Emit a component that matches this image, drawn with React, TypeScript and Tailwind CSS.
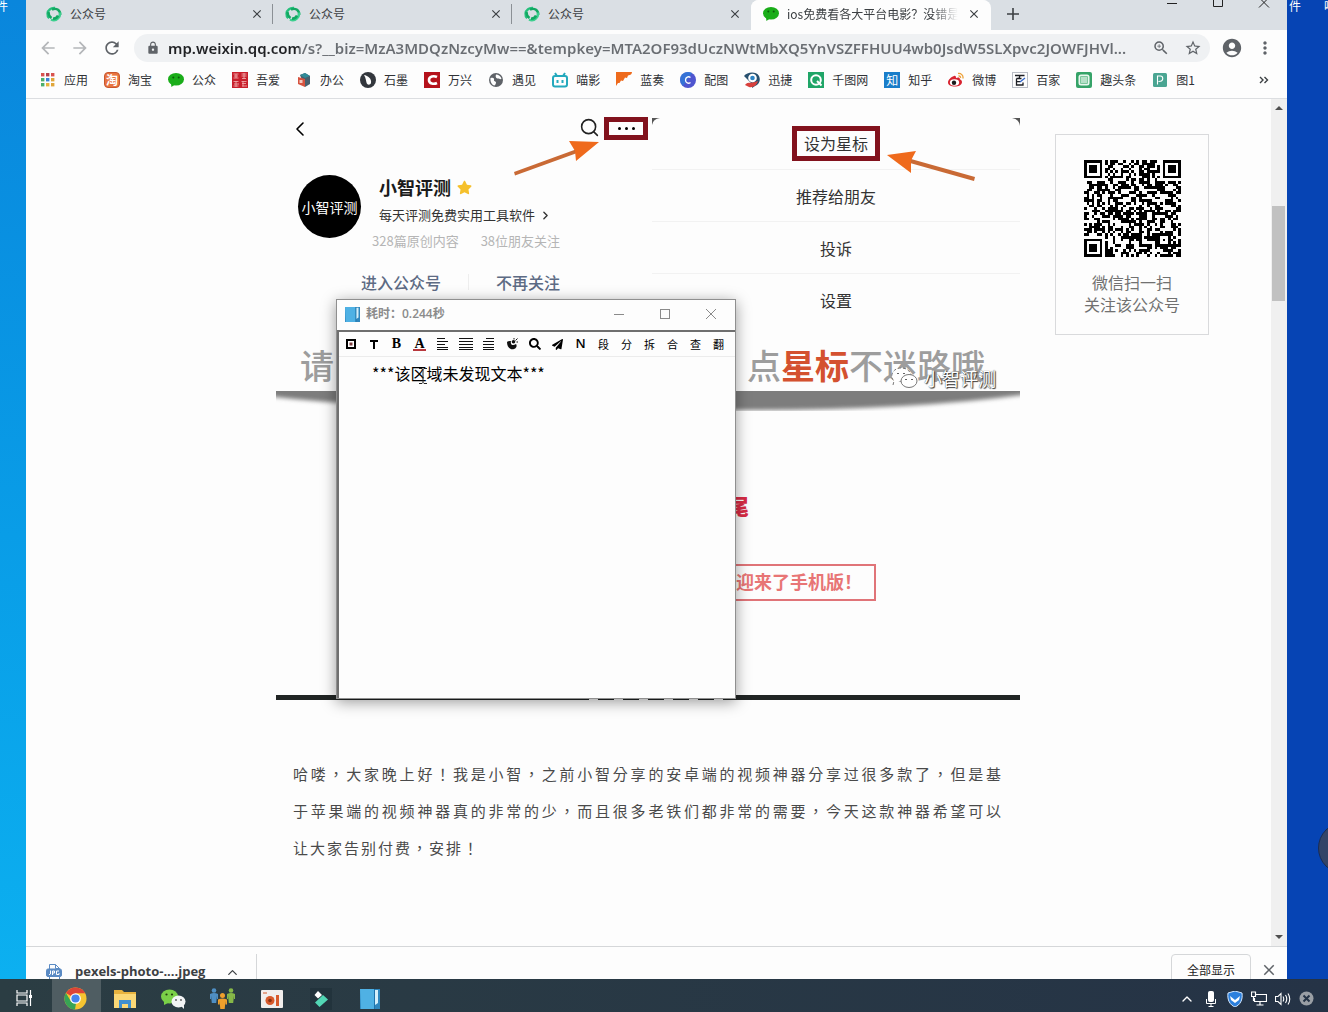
import type { ReactNode } from "react";
import clsx from "clsx";
import {
  MdAccountCircle,
  MdArrowBack,
  MdArrowForward,
  MdClose,
  MdLock,
  MdMoreVert,
  MdRefresh,
  MdStarBorder,
  MdZoomIn,
} from "react-icons/md";
import { FaPaperPlane, FaSearch, FaStar } from "react-icons/fa";
import { ChevronLeft, ChevronRight, ChevronUp, Search } from "lucide-react";

type Bookmark = {
  label: string;
  icon: ReactNode;
};

function SpiralIcon() {
  return (
    <svg width="16" height="16" viewBox="0 0 16 16" fill="none" strokeWidth="2.4">
      <path d="M3.200 12.200A6 6 0 0 1 4 3.200Q6 1.600 9 1.900" stroke="#25c07c" />
      <path d="M6 3.600Q9.500 2 12 3.800A6 6 0 0 1 14.200 9" stroke="#12a862" />
      <path d="M14 6.500Q14.500 10 12 12.300A6 6 0 0 1 5 13.500" stroke="#3ccf8e" />
      <path d="M12 9.500Q11 12.500 7 12.800" stroke="#12a862" />
      <path d="M2.500 6Q2.500 10 5.500 12" stroke="#12a862" />
    </svg>
  );
}

function BubbleIcon() {
  return (
    <svg width="16" height="16" viewBox="0 0 16 16">
      <path d="M3 11 3.400 15 7 12.600z" fill="#1aad19" />
      <ellipse cx="8" cy="7.200" rx="8" ry="6.300" fill="#1aad19" />
      <circle cx="5.300" cy="5.600" r="1" fill="#0b5d0a" />
      <circle cx="10.700" cy="5.600" r="1" fill="#0b5d0a" />
    </svg>
  );
}

function NotebookIcon({ size }: { size: number }) {
  return (
    <svg width={size} height={size} viewBox="0 0 20 20">
      <rect width="20" height="20" fill="#2f86bd" />
      <path d="M0 0h14v20H1z" fill="#4fb1e4" />
      <path d="M15 1h3v13l-3 2z" fill="#d5effa" />
      <path d="M14.500 0v20" stroke="#1d6ea6" strokeWidth=".8" />
    </svg>
  );
}

const appColors = ["#d9534f", "#b6404c", "#d9534f", "#4caf6d", "#3b82d6", "#e0a63a", "#4caf6d", "#e6b53b", "#e0a63a"];

const bookmarks: Bookmark[] = [
  {
    label: "应用",
    icon: (
      <svg width="16" height="16" viewBox="0 0 16 16">
        {appColors.map((c, i) => (
          <rect key={i} x={1 + (i % 3) * 5} y={1 + Math.floor(i / 3) * 5} width="3.4" height="3.4" fill={c} />
        ))}
      </svg>
    ),
  },
  {
    label: "淘宝",
    icon: (
      <span className="flex size-4 items-center justify-center rounded-sm border border-[#c9572e] bg-[#e8743f] text-xs font-bold leading-none text-white">
        淘
      </span>
    ),
  },
  { label: "公众", icon: <BubbleIcon /> },
  {
    label: "吾爱",
    icon: (
      <svg width="16" height="16" viewBox="0 0 16 16">
        <rect width="16" height="16" fill="#c8202c" />
        <path
          d="M1.5 2h5M2 4h4M4 2v4M1.5 6h5M9.5 2h5M9.5 4h5M12 1v6M10 6.500h4M1.5 9.500h5M2 12h5M4 9v6M1.500 14h5M9.500 9.500h5M10 11.500h4M10 14h5M11 9v5.500"
          stroke="#f3b4b4"
          strokeWidth=".8"
        />
      </svg>
    ),
  },
  {
    label: "办公",
    icon: (
      <svg width="16" height="16" viewBox="0 0 16 16">
        <path d="M4 3 9 1 14 4v8l-5 3z" fill="#47606e" />
        <path d="M4 3 9 1 14 4 9 6z" fill="#2f8b98" />
        <path d="M2 5l7 2v8l-7-3z" fill="#d6533f" />
        <path d="M3.500 8h3v3h-3z" fill="#f3c9c0" />
      </svg>
    ),
  },
  {
    label: "石墨",
    icon: (
      <svg width="16" height="16" viewBox="0 0 16 16">
        <circle cx="8" cy="8" r="8" fill="#33373d" />
        <path d="M4 3c4 .5 8 4 7 8-.6 2-3.500 2.300-4.300.3C6 9 6 6 4 3z" fill="#fff" />
      </svg>
    ),
  },
  {
    label: "万兴",
    icon: (
      <svg width="16" height="16" viewBox="0 0 16 16">
        <rect width="16" height="16" fill="#b5121b" />
        <path d="M13 5C10 3.500 5 4 5 8s5 4.500 8 3" fill="none" stroke="#fff" strokeWidth="2.600" />
      </svg>
    ),
  },
  {
    label: "遇见",
    icon: (
      <svg width="16" height="16" viewBox="0 0 16 16">
        <circle cx="8" cy="8" r="7" fill="#5f6368" />
        <path d="M2.500 6c3-1 4 .5 3.500 2s2 1 2 2.500-1 2.500-1.500 3C4 13 2 10 2.500 6zM8 2.500c2 0 4.500 1.500 5.500 4-1 1.500-2 0-3.500 0S7 5 8 2.500z" fill="#fff" />
      </svg>
    ),
  },
  {
    label: "喵影",
    icon: (
      <svg width="16" height="16" viewBox="0 0 16 16" fill="none" stroke="#24a9bd" strokeWidth="2">
        <rect x="1" y="4" width="14" height="10.500" rx="2" />
        <path d="M3 1l2 3M13 1l-2 3M5.500 8v3M10.500 8v3" />
      </svg>
    ),
  },
  {
    label: "蓝奏",
    icon: (
      <svg width="16" height="16" viewBox="0 0 16 16">
        <path d="M0 0h16q0 3-4 3.500l-1 2.500-2-.5L7 9 5 8.500 3.500 11 2 11 0 14z" fill="#ee6a1c" />
      </svg>
    ),
  },
  {
    label: "配图",
    icon: (
      <svg width="16" height="16" viewBox="0 0 16 16">
        <circle cx="8" cy="8" r="8" fill="#4f55cf" />
        <path d="M0 8a8 8 0 0 1 12-7L3 14a8 8 0 0 1-3-6z" fill="#2b7fd8" opacity=".7" />
        <path d="M10.500 5.500C8.500 4 5.500 5 5.500 8s3 4 5 2.500" fill="none" stroke="#fff" strokeWidth="1.300" />
      </svg>
    ),
  },
  {
    label: "迅捷",
    icon: (
      <svg width="16" height="16" viewBox="0 0 16 16">
        <path d="M0 4C3 0 12-1 15 4c2 4 0 9-4 10l-3 2 0-4z" fill="#28506f" />
        <path d="M1 13C4 9 8 12 14 9c-1 4-5 7-9 6z" fill="#d8403c" />
        <circle cx="8.500" cy="6" r="4.300" fill="#fff" />
        <circle cx="8.500" cy="6" r="2.300" fill="#2d84c6" />
      </svg>
    ),
  },
  {
    label: "千图网",
    icon: (
      <svg width="16" height="16" viewBox="0 0 16 16">
        <rect width="16" height="16" fill="#1fa567" />
        <circle cx="8" cy="8" r="4.800" fill="none" stroke="#fff" strokeWidth="2" />
        <path d="M9 9l4.500 4.500" stroke="#fff" strokeWidth="2" />
      </svg>
    ),
  },
  {
    label: "知乎",
    icon: (
      <span className="flex size-4 items-center justify-center bg-[#1a7dc9] text-xs leading-none text-white">知</span>
    ),
  },
  {
    label: "微博",
    icon: (
      <svg width="16" height="16" viewBox="0 0 16 16">
        <path d="M6 4C3 5 0 8 0 10.500 0 16 14 16 14 10c0-2-2-2.500-2-2.500C12 5 10 5 8 6c0-1.500-.5-2.500-2-2z" fill="#d8232f" />
        <ellipse cx="6.500" cy="10.500" rx="4.600" ry="3.200" fill="#fff" />
        <circle cx="6" cy="10.700" r="2.200" fill="#1b1b1b" />
        <path d="M10 1.500c3-.6 5.500 2 5 5M10.500 4c1.500-.2 2.300.8 2 2" stroke="#eda23a" fill="none" strokeWidth="1.300" />
      </svg>
    ),
  },
  {
    label: "百家",
    icon: (
      <svg width="16" height="16" viewBox="0 0 16 16" fill="none" stroke="#1d1f24" strokeWidth="1.300">
        <rect x=".5" y=".5" width="15" height="15" stroke="#b8bcc4" strokeWidth="1" />
        <path d="M3 3.500h9.500M8 3.500 7 6.500M4.500 6.500v6.500h6.500V10.500M4.500 6.500h5M4.500 9.700h3.500" />
        <path d="M8 10l5-4" stroke="#2b62c9" />
      </svg>
    ),
  },
  {
    label: "趣头条",
    icon: (
      <svg width="16" height="16" viewBox="0 0 16 16">
        <rect width="16" height="16" rx="2" fill="#36a368" />
        <rect x="2.500" y="2.500" width="11" height="11" rx="2.500" fill="#e9f7ef" />
        <rect x="4" y="4" width="8" height="8" rx="1" fill="#7cc79c" />
        <path d="M6 5v6M8 5v6M10 5v6" stroke="#fff" strokeWidth=".9" />
      </svg>
    ),
  },
  {
    label: "图1",
    icon: (
      <svg width="16" height="16" viewBox="0 0 16 16">
        <rect x="1" y="1" width="14" height="14" rx="1.500" fill="#4aa592" />
        <path d="M5.500 12.500V4h3c3 0 3 5 0 5.200l-2 .3" stroke="#fff" fill="none" strokeWidth="1.100" />
      </svg>
    ),
  },
];

const QR_SIZE = 37;

// finder squares in three corners, one alignment square, hashed noise elsewhere
function isDark(x: number, y: number) {
  const corners = [
    [0, 0],
    [QR_SIZE - 7, 0],
    [0, QR_SIZE - 7],
  ];
  for (const [cx, cy] of corners) {
    const dx = x - cx;
    const dy = y - cy;
    if (dx >= -1 && dx <= 7 && dy >= -1 && dy <= 7) {
      const ring = Math.max(Math.abs(dx - 3), Math.abs(dy - 3));
      return ring === 3 || ring <= 1;
    }
  }
  const align = Math.max(Math.abs(x - 30), Math.abs(y - 30));
  if (align <= 2) return align !== 1;
  let h = (x * 374761393 + y * 668265263) | 0;
  h = Math.imul(h ^ (h >>> 13), 1274126177);
  return ((h ^ (h >>> 16)) & 255) > 122;
}

function QrCode() {
  let d = "";
  for (let y = 0; y < QR_SIZE; y++) {
    for (let x = 0; x < QR_SIZE; x++) {
      if (isDark(x, y)) d += `M${x} ${y}h1v1h-1z`;
    }
  }
  return (
    <svg width="97" height="97" viewBox="0 0 37 37" shapeRendering="crispEdges" role="img" aria-label="二维码">
      <path d={d} fill="#000" />
    </svg>
  );
}

function Tab({ title, active = false }: { title: string; active?: boolean }) {
  return (
    <div
      className={clsx(
        "flex h-full min-w-0 flex-[0_1_239px] items-center pr-2 pl-3 text-xs",
        active && "rounded-t-lg bg-[#fdfdfd]"
      )}
    >
      {active ? <BubbleIcon /> : <SpiralIcon />}
      <span
        className={clsx(
          "ml-2 flex-1 overflow-hidden whitespace-nowrap",
          active && "[mask-image:linear-gradient(to_right,#000_85%,transparent)]"
        )}
      >
        {title}
      </span>
      <button aria-label="关闭标签页" className="ml-2 flex size-4 items-center justify-center">
        <MdClose size={14} />
      </button>
    </div>
  );
}

function TabStrip() {
  return (
    <div className="flex h-[30px] shrink-0 items-stretch bg-[#dadfe4] pl-2 text-[#3c4043]">
      <div className="flex min-w-0 flex-1 items-center pb-[3px]">
        <Tab title="公众号" />
        <span className="-ml-px h-5 w-px bg-[#8b9095]" />
        <Tab title="公众号" />
        <span className="-ml-px h-5 w-px bg-[#8b9095]" />
        <Tab title="公众号" />
        <div className="-mb-[3px] flex h-[30px] min-w-0 flex-[0_1_240px] rounded-t-lg bg-[#fdfdfd] pb-[3px]">
          <Tab title="ios免费看各大平台电影？没错是真的" active />
        </div>
        <button aria-label="新标签页" className="ml-3 flex size-5 items-center justify-center">
          <svg width="12" height="12" viewBox="0 0 12 12" stroke="#3c4043" strokeWidth="1.600">
            <path d="M6 0v12M0 6h12" />
          </svg>
        </button>
      </div>
      <div className="flex h-2 gap-[34px] pr-[17px]">
        <button aria-label="最小化">
          <svg width="12" height="8" viewBox="0 0 12 8" stroke="#222">
            <path d="M1 3.500h10" />
          </svg>
        </button>
        <button aria-label="最大化">
          <svg width="12" height="8" viewBox="0 0 12 8" fill="none" stroke="#222">
            <path d="M1.500 0v6.500h9V0" />
          </svg>
        </button>
        <button aria-label="关闭">
          <svg width="12" height="8" viewBox="0 0 12 8" stroke="#222">
            <path d="M1 7.500 10 -1.500M11 7.500 2 -1.500" />
          </svg>
        </button>
      </div>
    </div>
  );
}

function AddressBar() {
  return (
    <div className="flex h-9 shrink-0 items-center px-3 text-[#5f6368]">
      <button aria-label="后退" className="mr-3 text-[#b4b6b9]">
        <MdArrowBack size={20} />
      </button>
      <button aria-label="前进" className="mr-3 text-[#b4b6b9]">
        <MdArrowForward size={20} />
      </button>
      <button aria-label="重新加载">
        <MdRefresh size={20} />
      </button>
      <div className="ml-3 flex h-7 min-w-0 flex-1 items-center rounded-full bg-[#eff1f3] pr-2 pl-3">
        <MdLock size={14} className="mr-2 shrink-0" />
        <input
          aria-label="地址栏"
          readOnly
          className="min-w-0 flex-1 truncate bg-[linear-gradient(to_right,#202124_131px,#696d72_131px)] bg-clip-text font-['Noto_Sans'] text-[15px] font-semibold text-transparent outline-none"
          value="mp.weixin.qq.com/s?__biz=MzA3MDQzNzcyMw==&tempkey=MTA2OF93dUczNWtMbXQ5YnVSZFFHUU4wb0JsdW5SLXpvc2JOWFJHVl..."
        />
        <button aria-label="缩放" className="ml-3">
          <MdZoomIn size={18} />
        </button>
        <button aria-label="收藏" className="ml-3.5">
          <MdStarBorder size={18} />
        </button>
      </div>
      <button aria-label="用户" className="ml-[11px]">
        <MdAccountCircle size={22} />
      </button>
      <button aria-label="菜单" className="ml-3">
        <MdMoreVert size={20} />
      </button>
    </div>
  );
}

function BookmarksBar() {
  return (
    <nav className="flex h-[33px] shrink-0 items-center gap-4 border-b border-[#dcdee1] pb-1 pl-[14px] text-xs text-[#303236]">
      {bookmarks.map((b) => (
        <a key={b.label} href="#" className="flex items-center gap-2 whitespace-nowrap">
          {b.icon}
          {b.label}
        </a>
      ))}
      <button aria-label="更多书签" className="mr-[18px] ml-auto">
        <svg width="10" height="8" viewBox="0 0 10 8" fill="none" stroke="#3c4043" strokeWidth="1.400">
          <path d="M1 1l3 3-3 3M5.500 1l3 3-3 3" />
        </svg>
      </button>
    </nav>
  );
}

function UpArrow() {
  return (
    <svg width="88" height="36" viewBox="0 0 88 36">
      <path d="M1 32 64 9l1.500 3.500L2 35.500z" fill="#c96a35" />
      <path d="M56 1 86 2 63 21 62 11z" fill="#ef6a1c" />
    </svg>
  );
}

function BackArrow() {
  return (
    <svg width="90" height="34" viewBox="0 0 90 34">
      <path d="M24 8 88 26l-1 4L23 12z" fill="#c96a35" />
      <path d="M0 4 29 0 24 9.500 24 22z" fill="#ef6a1c" />
    </svg>
  );
}

function ProfilePanel() {
  return (
    <div className="min-w-0 pr-1">
      <div className="flex h-[23px] items-center pl-3">
        <ChevronLeft size={24} strokeWidth={1.6} className="text-black" />
        <Search size={21} strokeWidth={1.8} className="mb-0.5 ml-auto text-[#222]" />
        <span className="ml-1 flex h-[23px] w-11 items-center justify-center gap-1 border-5 border-[#82121d]">
          <i className="size-[3px] rounded-full bg-black" />
          <i className="size-[3px] rounded-full bg-black" />
          <i className="size-[3px] rounded-full bg-black" />
        </span>
      </div>
      <div className="flex h-[35px] justify-end pr-[47px]">
        <UpArrow />
      </div>
      <div className="flex pl-[22px]">
        <div className="flex size-[63px] shrink-0 items-center justify-center rounded-full bg-black text-sm whitespace-nowrap text-white">
          小智评测
        </div>
        <div className="ml-[11px] flex flex-col whitespace-nowrap">
          <div className="flex h-6 items-center gap-1.5 pl-[7px] text-lg font-bold text-[#1b1b1b]">
            小智评测
            <FaStar size={15} className="text-[#f5c02c]" />
          </div>
          <div className="flex h-8 items-center gap-1 pl-[7px] text-[13px] text-[#333]">
            每天评测免费实用工具软件
            <ChevronRight size={13} strokeWidth={2.5} />
          </div>
          <div className="flex h-5 items-center gap-[22px] text-[13px] text-[#b5b5b5]">
            <span>328篇原创内容</span>
            <span>38位朋友关注</span>
          </div>
        </div>
      </div>
      <div className="mt-[19px] flex items-center pl-[85px] text-base leading-6 font-medium whitespace-nowrap text-[#5d6b84]">
        <a href="#">进入公众号</a>
        <span className="mx-[27px] h-4 w-px bg-[#eee]" />
        <a href="#">不再关注</a>
      </div>
    </div>
  );
}

function MenuPanel() {
  const row = "flex h-[52px] items-center justify-center";
  return (
    <div className="relative min-w-0 pt-px text-base text-[#333]">
      <svg width="8" height="8" viewBox="0 0 8 8" className="absolute top-px left-0">
        <path d="M0 0h8Q1 1 0 7z" fill="#555" />
      </svg>
      <svg width="8" height="8" viewBox="0 0 8 8" className="absolute top-px right-0">
        <path d="M8 0H0q7 1 8 8z" fill="#555" />
      </svg>
      <div className={clsx(row, "border-b border-[#f2f2f2]")}>
        <span className="border-5 border-[#82121d] px-[7px] leading-[25px]">设为星标</span>
      </div>
      <div className="absolute top-[34px] right-[43px]">
        <BackArrow />
      </div>
      <div className={clsx(row, "border-b border-[#f2f2f2]")}>推荐给朋友</div>
      <div className={clsx(row, "border-b border-[#f2f2f2]")}>投诉</div>
      <div className={row}>设置</div>
    </div>
  );
}

function Article() {
  return (
    <article className="ml-[250px] max-w-[744px] flex-1 pt-[18px]">
      <div className="grid h-[210px] grid-cols-[376fr_368fr]">
        <ProfilePanel />
        <MenuPanel />
      </div>
      <div className="relative flex h-16 items-center justify-between pt-3 pr-[35px] pl-6 text-[34px] leading-none font-medium text-[#9d9d9d]">
        <span>请</span>
        <span>
          点<b className="font-bold text-[#d4512f]">星标</b>不迷路哦
        </span>
        <div className="absolute right-6 bottom-px flex items-center gap-1 text-lg leading-6 font-normal text-white [text-shadow:1px_1px_1px_#333,0_0_1px_#333]">
          <svg width="30" height="24" viewBox="0 0 30 24" fill="#fff" stroke="#777">
            <path d="M3 19l1-4C-1 10 3 2 11 2c6 0 9 3 10 7" strokeDasharray="3 2" />
            <ellipse cx="19" cy="15" rx="8" ry="6.500" />
            <path d="M8 7v1M14 7v1M16 13v1M22 13v1" stroke="#333" strokeWidth="1.500" />
          </svg>
          小智评测
        </div>
      </div>
      <svg viewBox="0 0 744 20" preserveAspectRatio="none" className="block h-5 w-full">
        <defs>
          <filter id="soft" x="-5%" y="-50%" width="110%" height="200%">
            <feGaussianBlur stdDeviation="2" />
          </filter>
        </defs>
        <path d="M-10 -10H754V3Q640 19 480 19H270Q110 19-10 5z" fill="#7d7d7d" filter="url(#soft)" />
      </svg>
      <div className="mt-[79px] pr-[271px] text-right text-[22px] leading-[30px] font-black text-[#d92b45]">尾</div>
      <div className="mx-auto mt-11 flex h-[37px] w-[456px] items-center justify-end border-2 border-[#e07478] pr-3 pb-[3px] text-lg font-bold text-[#e87575]">
        迎来了手机版！
      </div>
      <div className="mt-[94px] flex h-[5px] items-end justify-center gap-4 bg-[#212524] pl-4">
        {[0, 1, 2, 3, 4, 5].map((n) => (
          <i key={n} className="h-[3px] w-[9px] bg-[#fdfdfd]" />
        ))}
      </div>
      <p className="mt-[55px] px-[17px] font-['Noto_Sans_CJK_TC',sans-serif] text-[15px] leading-[37px] tracking-[2px] whitespace-nowrap text-[#4a4a4a]">
        <span className="block [text-align-last:justify]">
          哈喽，大家晚上好！我是小智，之前小智分享的安卓端的视频神器分享过很多款了，但是基
        </span>
        <span className="block [text-align-last:justify]">
          于苹果端的视频神器真的非常的少，而且很多老铁们都非常的需要，今天这款神器希望可以
        </span>
        <span className="block">让大家告别付费，安排！</span>
      </p>
    </article>
  );
}

function Scrollbar() {
  return (
    <div className="flex w-4 shrink-0 flex-col items-center bg-[#f0f0f0] py-1.5 pr-px">
      <svg width="8" height="5" viewBox="0 0 8 5">
        <path d="M0 5 4 1l4 4z" fill="#505050" />
      </svg>
      <div className="mt-24 h-[95px] w-[13px] bg-[#c1c1c1]" />
      <svg width="8" height="5" viewBox="0 0 8 5" className="mt-auto">
        <path d="M0 0l4 4 4-4z" fill="#505050" />
      </svg>
    </div>
  );
}

function DownloadBar() {
  return (
    <div className="flex h-[33px] shrink-0 items-start overflow-hidden border-t border-[#d5d7d9] pt-[7px] text-[#3c4043]">
      <div className="flex h-9 w-[231px] shrink-0 items-center border-r border-[#d5d7d9] pr-4 pl-5">
        <svg width="16" height="16" viewBox="0 0 16 16" fill="none" stroke="#5b8bc4">
          <path d="M3.500 5V.5h6l4 4V5M3.500 12v3.500h10V12M9.500.5v4h4" />
          <rect x=".5" y="5" width="15" height="7.500" rx="1.500" fill="#5b8bc4" />
          <path d="M4.500 6.500V10L3 10.800M6.500 11V7H8.500v2h-2M13 7h-2.500v3.500H13V9" stroke="#fff" />
        </svg>
        <span className="ml-[13px] font-['Open_Sans'] text-[13px] font-bold whitespace-nowrap">pexels-photo-....jpeg</span>
        <button aria-label="下载选项" className="ml-auto">
          <ChevronUp size={15} />
        </button>
      </div>
      <button className="ml-auto h-8 rounded border border-[#d5d7d9] px-[15px] text-xs text-[#222]">全部显示</button>
      <button aria-label="关闭下载栏" className="mx-[9px] flex h-8 items-center text-[#5f6368]">
        <MdClose size={18} />
      </button>
    </div>
  );
}

const textTools = ["段", "分", "拆", "合", "查", "翻"];

function AlignIcon({ lines }: { lines: string }) {
  return (
    <svg width="14" height="12" viewBox="0 0 14 12" stroke="#111" shapeRendering="crispEdges">
      <path d={lines} />
    </svg>
  );
}

const iconTools: [string, ReactNode][] = [
  [
    "截图",
    <svg width="10" height="10" viewBox="0 0 10 10">
      <rect x="1" y="1" width="8" height="8" fill="#fff" stroke="#000" strokeWidth="2" />
      <rect x="3.500" y="3.500" width="3" height="3" fill="#7c3c3c" />
    </svg>,
  ],
  [
    "文字",
    <svg width="8" height="9" viewBox="0 0 8 9" stroke="#000" strokeWidth="2">
      <path d="M0 1h8M4 1v8" />
    </svg>,
  ],
  ["加粗", <b className="font-['Liberation_Serif'] text-sm">B</b>],
  [
    "颜色",
    <b className="border-b-2 border-[#b8383d] px-px font-['Liberation_Serif'] text-sm leading-[11px]">A</b>,
  ],
  ["左对齐", <AlignIcon lines="M1 .5h8M1 3.500h11M1 6.500h8M1 9.500h11M1 11.500h11" />],
  ["两端对齐", <AlignIcon lines="M0 .5h14M0 3.500h14M0 6.500h14M0 9.500h14M0 11.500h14" />],
  ["右对齐", <AlignIcon lines="M4 .5h8M1 3.500h11M1 6.500h11M1 9.500h11M1 11.500h11" />],
  [
    "清理",
    <svg width="12" height="12" viewBox="0 0 12 12">
      <path d="M1 4c0 6 4 8 7 7 3-1 3-4 2-5-3 2-6 1-5-3C4 3 2 3 1 4z" fill="#111" />
      <circle cx="7.500" cy="3.800" r="1.800" fill="#111" />
      <path d="M9.500 2.500 11.500.5M8 1.500V0M10.500 4H12" stroke="#111" />
    </svg>,
  ],
  ["搜索", <FaSearch size={12} />],
  ["发送", <FaPaperPlane size={11} />],
  ["笔记", <b className="font-['Open_Sans'] text-[13px] font-semibold">N</b>],
];

function OcrWindow() {
  return (
    <section className="absolute top-[299px] left-[336px] flex h-[400px] w-[400px] flex-col border border-[#8f8f8f] bg-[#fdfdfd] shadow-[0_3px_14px_rgba(0,0,0,0.4)]">
      <header className="flex h-[30px] shrink-0 items-center pr-[18px] pb-0.5 pl-2 text-xs text-[#8b8b8b]">
        <NotebookIcon size={15} />
        <span className="ml-1.5 font-['Open_Sans','Noto_Sans_CJK_SC',sans-serif] font-semibold">耗时：0.244秒</span>
        <div className="ml-auto flex items-center gap-[34px]">
          <button aria-label="最小化">
            <svg width="12" height="12" viewBox="0 0 12 12" stroke="#8a8a8a">
              <path d="M1 6.500h10" />
            </svg>
          </button>
          <button aria-label="最大化">
            <svg width="12" height="12" viewBox="0 0 12 12" fill="none" stroke="#8a8a8a">
              <rect x="1.500" y="1.500" width="9" height="9" />
            </svg>
          </button>
          <button aria-label="关闭">
            <svg width="12" height="12" viewBox="0 0 12 12" stroke="#8a8a8a">
              <path d="M1 1l10 10M11 1 1 11" />
            </svg>
          </button>
        </div>
      </header>
      <div className="flex min-h-0 flex-1 flex-col border-t-2 border-l-2 border-[#6f6f6f]">
        <div className="flex h-[25px] shrink-0 items-center border-b border-[#ececec] text-[11px] text-black">
          {iconTools.map(([name, icon]) => (
            <button key={name} aria-label={name} className="flex w-[23px] items-center justify-center">
              {icon}
            </button>
          ))}
          {textTools.map((t) => (
            <button key={t} className="flex w-[23px] items-center justify-center">
              {t}
            </button>
          ))}
        </div>
        <textarea
          aria-label="识别结果"
          readOnly
          className="w-full flex-1 resize-none px-[33px] py-1 text-base leading-6 text-black outline-none"
          value="***该区域未发现文本***"
        />
      </div>
      <svg width="8" height="16" viewBox="0 0 8 16" fill="none" stroke="#222" className="absolute top-[68px] left-[82px]">
        <path d="M0 .5h3l1 1 1-1h3M4 1.500v13M0 15.500h3l1-1 1 1h3" />
      </svg>
    </section>
  );
}

function ChromeIcon() {
  return (
    <svg width="23" height="23" viewBox="0 0 24 24">
      <circle cx="12" cy="12" r="11.500" fill="#f6c431" />
      <path d="M12 12 2 6.300A11.500 11.500 0 0 1 22.200 6.500H12z" fill="#dc4437" />
      <path d="M2 6.200 7.300 15 12.500 17 11.500 23.500A11.500 11.500 0 0 1 2 6.200z" fill="#37a455" />
      <circle cx="12" cy="12" r="5.600" fill="#fff" />
      <circle cx="12" cy="12" r="4.300" fill="#4484ee" />
    </svg>
  );
}

const taskIcons: [string, ReactNode][] = [
  ["Chrome", <ChromeIcon />],
  [
    "文件资源管理器",
    <svg width="22" height="19" viewBox="0 0 22 19">
      <path d="M0 1h8l2 2h12v16H0z" fill="#e8b33f" />
      <path d="M0 5h22v14H0z" fill="#fbd876" />
      <path d="M5 11h12v8h-3v-4H8v4H5z" fill="#3f8fd0" />
    </svg>,
  ],
  [
    "微信",
    <svg width="25" height="20" viewBox="0 0 25 20">
      <path d="M3 12 3 16 7 14z" fill="#7ad048" />
      <ellipse cx="8.500" cy="7.500" rx="8.500" ry="7" fill="#7ad048" />
      <circle cx="5.500" cy="5.500" r="1.100" fill="#27420f" />
      <circle cx="11" cy="5.500" r="1.100" fill="#27420f" />
      <ellipse cx="17.500" cy="12.500" rx="7" ry="6" fill="#f2f4f5" />
      <path d="M20 17l3 3v-4z" fill="#f2f4f5" />
      <circle cx="15" cy="11" r=".9" fill="#555" />
      <circle cx="20" cy="11" r=".9" fill="#555" />
    </svg>,
  ],
  [
    "联系人",
    <svg width="25" height="21" viewBox="0 0 25 21">
      <g fill="#4f8fc4">
        <circle cx="4" cy="2.500" r="2.300" />
        <path d="M0 6q4-2 8 0v5H7V7.500l-.8 7.500H1.800L1 7.500V11H0z" />
      </g>
      <g fill="#86b848">
        <circle cx="21" cy="2.500" r="2.300" />
        <path d="M17 6q4-2 8 0v5h-1V7.500l-.8 7.500h-4.400L18 7.500V11h-1z" />
      </g>
      <g fill="#f0a02c">
        <circle cx="12.500" cy="7.500" r="2.500" />
        <path d="M8 11.500q4.500-2 9 0v5h-1.500V13l-.8 8h-4.400l-.8-8v3.500H8z" />
      </g>
    </svg>,
  ],
  [
    "录屏",
    <svg width="22" height="18" viewBox="0 0 22 18">
      <rect width="22" height="18" rx="1" fill="#f1eeec" />
      <circle cx="9" cy="10.500" r="4.500" fill="#d85a2b" />
      <circle cx="9" cy="10.500" r="1.800" fill="#8b3413" />
      <path d="M15 5h3v11h-3z" fill="#d85a2b" />
      <path d="M2 3h4" stroke="#d85a2b" />
    </svg>,
  ],
  [
    "剪辑",
    <svg width="22" height="22" viewBox="0 0 22 22">
      <rect width="22" height="22" fill="#22333c" />
      <path d="M8 3l4 4-4 3.500L4.500 7z" fill="#fff" />
      <path d="M13 7l5 4.500L9.500 19 5 14.500z" fill="#52d6b4" />
    </svg>,
  ],
  ["文字识别", <NotebookIcon size={20} />],
];

function Taskbar() {
  return (
    <footer className="flex h-[33px] shrink-0 items-end overflow-hidden bg-linear-to-r from-[#2b3d43] to-[#253346] text-white">
      <button aria-label="任务视图" className="flex h-full w-[52px] items-center justify-center pt-1 pr-1">
        <svg width="17" height="16" viewBox="0 0 17 16" fill="none" stroke="#fff" strokeWidth="1.200">
          <path d="M1 0v3h10V0M1 16v-3h10v3M1 5h10v6H1zM14.500 0v16" />
          <path d="M13 5h3v3h-3z" fill="#fff" stroke="none" />
        </svg>
      </button>
      {taskIcons.map(([name, icon], i) => (
        <button
          key={name}
          aria-label={name}
          className={clsx(
            "flex h-full w-[49px] items-center justify-center pt-1.5 pr-0.5",
            i === 0 && "bg-[#4f5d62]"
          )}
        >
          {icon}
        </button>
      ))}
      <div className="ml-auto flex h-full items-center gap-2 pt-1.5 pr-[14px]">
        <ChevronUp size={16} />
        <svg width="16" height="18" viewBox="0 0 16 18" fill="none" stroke="#fff">
          <rect x="5.500" y="1.500" width="5" height="10" rx="1" fill="#fff" />
          <path d="M3.500 9v4.500h9V9M8 14v3M5.500 16.500h5" />
        </svg>
        <svg width="16" height="16" viewBox="0 0 16 16">
          <path d="M1 2 8 0l7 2c1 7-2 12-7 14C3 14 0 9 1 2z" fill="#2d80dd" stroke="#d4e8ff" />
          <path d="M3 5l5 4 5-4-1 4-4 3-4-3z" fill="#fff" />
        </svg>
        <svg width="16" height="15" viewBox="0 0 16 15" fill="none" stroke="#fff" strokeWidth="1.200">
          <path d="M5 3.500h10.500v7H3.500V7M9 10.500v3M5.500 14h7" />
          <path d="M.5 1h4v4.500h-4zM2.500 5.500V10" />
        </svg>
        <svg width="16" height="14" viewBox="0 0 16 14" fill="none" stroke="#fff" strokeWidth="1.100">
          <path d="M.5 4.500h2.500l3-3v11l-3-3H.5zM8 4.500q1.500 2.500 0 5M10.500 3q2.500 4 0 8M13 1.500q3.500 5.500 0 11" />
        </svg>
        <svg width="15" height="15" viewBox="0 0 15 15">
          <circle cx="7.500" cy="7.500" r="7" fill="#9a9fa5" />
          <path d="M4.500 4.500l6 6M10.500 4.500l-6 6" stroke="#253346" strokeWidth="2" />
        </svg>
      </div>
    </footer>
  );
}

export default function App() {
  return (
    <div className="relative flex h-screen flex-col overflow-hidden bg-[#0644b4] font-['Noto_Sans_CJK_SC',sans-serif]">
      <div className="flex min-h-0 flex-1">
        <div className="flex w-[26px] shrink-0 items-start bg-linear-to-b from-[#0a86dc] to-[#0cb0f0] text-xs leading-3 text-white">
          <span className="-ml-1">件</span>
        </div>
        <main className="flex min-w-0 flex-1 flex-col overflow-hidden bg-[#fdfdfd]">
          <TabStrip />
          <AddressBar />
          <BookmarksBar />
          <div className="flex min-h-0 flex-1">
            <div className="flex min-w-0 flex-1 items-start gap-[35px] overflow-hidden pr-[62px]">
              <Article />
              <aside className="mt-[35px] flex h-[201px] w-[154px] shrink-0 flex-col items-center border border-[#d9dadc] pt-[25px] text-base leading-[22px] text-[#717171]">
                <QrCode />
                <p className="mt-[14px] text-center">
                  微信扫一扫
                  <br />
                  关注该公众号
                </p>
              </aside>
            </div>
            <Scrollbar />
          </div>
          <DownloadBar />
        </main>
        <div className="flex w-[41px] shrink-0 items-start justify-between overflow-hidden text-xs leading-3 whitespace-nowrap text-white">
          <span className="ml-0.5">件</span>
          <span className="-mr-2">哔</span>
        </div>
      </div>
      <Taskbar />
      <OcrWindow />
      <div className="absolute top-[822px] -right-[42px] size-[52px] rounded-full border border-[#1b2c52] bg-[#334468]" />
    </div>
  );
}
